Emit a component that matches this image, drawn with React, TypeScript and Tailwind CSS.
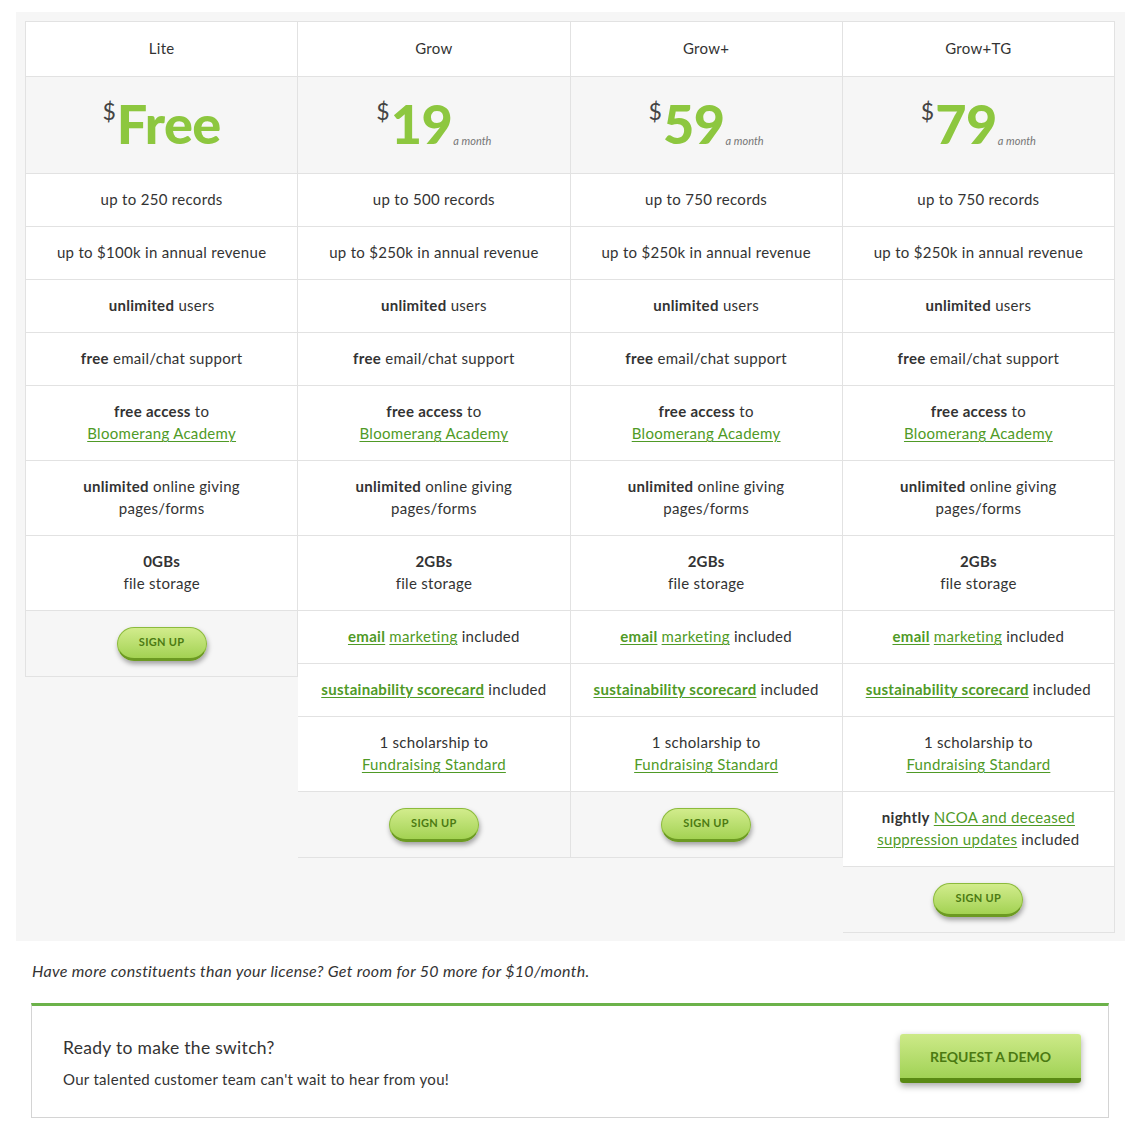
import React from "react";

const F = { fontFamily: "Lato, 'Open Sans', Arial, sans-serif" };

const L = ({ children, bold }: { children: React.ReactNode; bold?: boolean }) => (
  <a href="#" className={"text-[#4f9a26] underline underline-offset-2 decoration-1 " + (bold ? "font-bold" : "")}>
    {children}
  </a>
);

const B = ({ children }: { children: React.ReactNode }) => <span className="font-bold">{children}</span>;

type Cell = { h: number; c: React.ReactNode };

const SignUp = () => (
  <div className="h-[65px] bg-[#f6f6f6] flex items-center justify-center">
    <button
      className="w-[90px] h-[34px] rounded-full text-[11px] font-bold text-[#4b7a12] tracking-[0.3px] border border-[#8cbb3c] border-b-[3px] border-b-[#6c9a22] shadow-[1px_3px_5px_rgba(0,0,0,0.35)] bg-gradient-to-b from-[#d2ec8c] to-[#a3d252]"
    >
      SIGN UP
    </button>
  </div>
);

function Column({
  name,
  price,
  cells,
  first,
}: {
  name: string;
  price: string;
  cells: Cell[];
  first?: boolean;
}) {
  const isFree = price === "Free";
  return (
    <div
      className={
        "flex-1 flex flex-col border-[#e2e2e2] border-b border-r " + (first ? "border-l " : "")
      }
    >
      <div className="h-[56px] bg-white border-t border-b border-[#e2e2e2] flex items-center justify-center text-[15px] tracking-[0.3px] text-[#333] pb-[1px]">
        {name}
      </div>
      <div className="h-[97px] bg-[#f6f6f6] border-b border-[#e2e2e2] flex items-center justify-center">
        <div className="flex items-start relative -mt-[3px]">
          <span className="text-[23px] text-[#444] mt-[3px] mr-[1px] leading-none">$</span>
          <span className="text-[54px] font-black text-[#8dc73f] leading-none tracking-[-0.5px]">{price}</span>
          {!isFree && (
            <span className="self-end text-[11px] italic text-[#777] mb-[1px] ml-[1px]">a month</span>
          )}
        </div>
      </div>
      {cells.map((cell, i) => (
        <div
          key={i}
          style={{ height: cell.h }}
          className="bg-white border-b border-[#e2e2e2] flex items-center justify-center text-center text-[15px] tracking-[0.3px] leading-[22px] text-[#333] px-3 pb-[2px]"
        >
          <div>{cell.c}</div>
        </div>
      ))}
      <SignUp />
    </div>
  );
}

const base = (recs: string, rev: string, gb: string): Cell[] => [
  { h: 53, c: <>up to {recs} records</> },
  { h: 53, c: <>up to {rev} in annual revenue</> },
  { h: 53, c: <><B>unlimited</B> users</> },
  { h: 53, c: <><B>free</B> email/chat support</> },
  {
    h: 75,
    c: (
      <>
        <B>free access</B> to
        <br />
        <L>Bloomerang Academy</L>
      </>
    ),
  },
  {
    h: 75,
    c: (
      <>
        <B>unlimited</B> online giving
        <br />
        pages/forms
      </>
    ),
  },
  {
    h: 75,
    c: (
      <>
        <B>{gb}</B>
        <br />
        file storage
      </>
    ),
  },
];

const extra = (): Cell[] => [
  {
    h: 53,
    c: (
      <>
        <L bold>email</L> <L>marketing</L> included
      </>
    ),
  },
  {
    h: 53,
    c: (
      <>
        <L bold>sustainability scorecard</L> included
      </>
    ),
  },
  {
    h: 75,
    c: (
      <>
        1 scholarship to
        <br />
        <L>Fundraising Standard</L>
      </>
    ),
  },
];

export default function App() {
  return (
    <div style={F} className="bg-white w-[1143px] min-h-[1141px] pt-[12px]">
      <div className="mx-[16px] w-[1109px] bg-[#f6f6f6] p-[9px] pr-[10px] pb-[8px]">
        <div className="flex items-start">
          <Column first name="Lite" price="Free" cells={base("250", "$100k", "0GBs")} />
          <Column name="Grow" price="19" cells={[...base("500", "$250k", "2GBs"), ...extra()]} />
          <Column name="Grow+" price="59" cells={[...base("750", "$250k", "2GBs"), ...extra()]} />
          <Column
            name="Grow+TG"
            price="79"
            cells={[
              ...base("750", "$250k", "2GBs"),
              ...extra(),
              {
                h: 75,
                c: (
                  <>
                    <B>nightly</B> <L>NCOA and deceased</L>
                    <br />
                    <L>suppression updates</L> included
                  </>
                ),
              },
            ]}
          />
        </div>
      </div>
      <div className="ml-[31px] mr-[34px]">
        <p className="mt-[20px] text-[16px] italic text-[#333] leading-[20px] pl-[1px] tracking-[0.3px]">
          Have more constituents than your license? Get room for 50 more for $10/month.
        </p>
        <div className="mt-[22px] border border-[#d4d4d4] border-t-[3px] border-t-[#6cb24a] h-[115px] flex items-center justify-between pl-[31px] pr-[27px]">
          <div className="mt-[2px] tracking-[0.3px]">
            <div className="text-[17.5px] text-[#333] leading-[24px]">Ready to make the switch?</div>
            <div className="text-[15px] text-[#333] mt-[9px] leading-[20px]">
              Our talented customer team can't wait to hear from you!
            </div>
          </div>
          <button className="w-[181px] h-[49px] -mt-[6px] rounded-[3px] text-[14px] font-bold text-[#4b7a12] border-b-[5px] border-b-[#5a8a14] shadow-[0_3px_7px_rgba(0,0,0,0.35)] bg-gradient-to-b from-[#cdea88] to-[#a1d255]">
            REQUEST A DEMO
          </button>
        </div>
      </div>
    </div>
  );
}
